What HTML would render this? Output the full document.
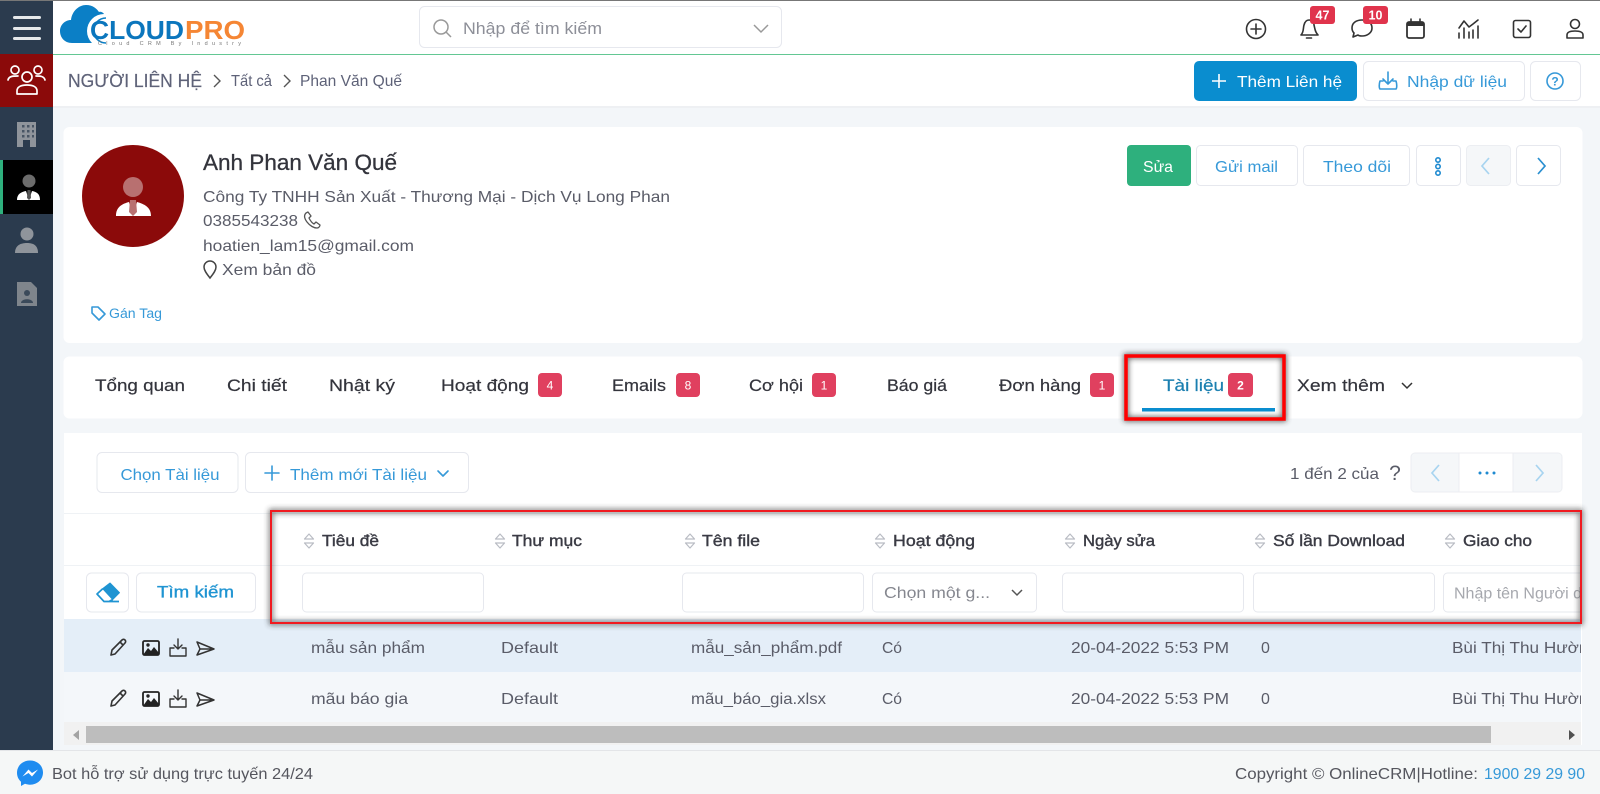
<!DOCTYPE html>
<html lang="vi"><head><meta charset="utf-8"><title>CloudPro - Người liên hệ</title>
<style>
html,body{margin:0;padding:0;width:1600px;height:794px;overflow:hidden;background:#f3f6f9}
svg{display:block}
text{font-family:"Liberation Sans","DejaVu Sans",sans-serif;fill:#5a5c68;font-size:16px}
.b{fill:#3699d8}.d{fill:#33343c}.m{fill:#3a3b44;stroke:#3a3b44;stroke-width:.4;font-size:16px}
.t{fill:#33343c;stroke:#33343c;stroke-width:.2;font-size:16.5px}.bd{fill:#fff;font-size:12px;text-anchor:middle}
.box{fill:#fff;stroke:#e6e8ee;stroke-width:1}
.ln{fill:none;stroke:#333;stroke-width:1.6;stroke-linecap:round;stroke-linejoin:round}
.lb{fill:none;stroke:#3699d8;stroke-width:1.6;stroke-linecap:round;stroke-linejoin:round}
</style></head><body>
<svg xmlns="http://www.w3.org/2000/svg" width="1600" height="794" viewBox="0 0 1600 794">
<defs>
<filter id="sh" x="-5%" y="-25%" width="110%" height="150%"><feGaussianBlur stdDeviation="3"/></filter>
<clipPath id="cl"><rect x="64" y="500" width="1517" height="240"/></clipPath>
<g id="sort"><path d="M-4.5 -2 L0 -7 L4.5 -2 Z M-4.5 2 L0 7 L4.5 2 Z" fill="none" stroke="#b9bcc4" stroke-width="1.2" stroke-linejoin="round"/></g>
<g id="acts">
<path d="M-40 7 L-39 2 L-29 -8 C-27 -10 -24 -7 -26 -5 L-36 6 Z M-31 -6 L-28 -3" fill="none" stroke="#333" stroke-width="1.6" stroke-linejoin="round"/>
<rect x="-8" y="-7" width="16" height="14" rx="1.5" fill="none" stroke="#222" stroke-width="1.8"/>
<path d="M-8 7 L-3 0 L0 3 L3 -1 L8 5 V7 Z" fill="#222"/><circle cx="-3" cy="-3" r="1.7" fill="#222"/>
<path d="M27 -9 V1 M23 -3 L27 1 L31 -3 M23 0 H19 V8 H35 V0 H31" fill="none" stroke="#333" stroke-width="1.4" stroke-linejoin="round" stroke-linecap="round"/>
<path d="M46 -6 L63 1 L46 7 L49 1 Z M49 1 H63" fill="none" stroke="#333" stroke-width="1.5" stroke-linejoin="round"/>
</g>
</defs>

<rect width="1600" height="794" fill="#f3f6f9"/>

<!-- top bar -->
<rect x="53" y="0" width="1547" height="54" fill="#fff"/>
<rect x="53" y="54" width="1547" height="1" fill="#63c793"/>
<rect x="0" y="0" width="1600" height="1" fill="#777"/>
<!-- logo -->
<path d="M72 43 C64 43 60 37 60 31 C60 25 65 20 71 20 C72 11 79 5 86 5 C93 5 97 9 99 12 C102 11 105 14 105 17 L105 43 Z" fill="#0b7fc6"/>
<circle cx="104" cy="31" r="17" fill="#fff"/>
<path d="M106 18 A12.500 12.500 0 0 0 106 43" fill="none" stroke="#0b7fc6" stroke-width="1.6"/>
<text x="90" y="39" style="font-size:26px;font-weight:700;fill:#0b76bd" textLength="94" lengthAdjust="spacingAndGlyphs">CLOUD</text>
<text x="185" y="39" style="font-size:26px;font-weight:700;fill:#f58634" textLength="60" lengthAdjust="spacingAndGlyphs">PRO</text>
<text x="98" y="45" style="font-size:5.500px;fill:#777" textLength="143" lengthAdjust="spacing">Cloud CRM By Industry</text>
<!-- search -->
<rect x="419.500" y="6.500" width="362" height="41" rx="5" class="box"/>
<circle cx="441" cy="27" r="7" fill="none" stroke="#999" stroke-width="1.500"/><path d="M446 32 L451 37" stroke="#999" stroke-width="1.500"/>
<text x="463" y="34" style="font-size:17px;fill:#8d8f98" textLength="139" lengthAdjust="spacingAndGlyphs">Nhập để tìm kiếm</text>
<path d="M754 25 L761 32 L768 25" fill="none" stroke="#999" stroke-width="1.500"/>
<!-- top icons -->
<circle cx="1256" cy="29" r="9.500" class="ln"/><path d="M1256 24 V34 M1251 29 H1261" class="ln"/>
<path d="M1301 35 C1304 32 1303 28 1304 25 C1305 21 1307 20 1309 20 C1312 20 1314 22 1314 25 C1315 29 1315 32 1318 35 Z" class="ln"/><path d="M1306.500 38 H1311.500" class="ln"/>
<path d="M1362 20 C1368 20 1372 23 1372 28 C1372 33 1367 36 1362 36 C1360 36 1359 36 1358 35 L1353 37 L1354 33 C1353 32 1352 30 1352 28 C1352 23 1356 20 1362 20 Z" class="ln"/>
<rect x="1407" y="22" width="17" height="16" rx="2" fill="none" stroke="#333" stroke-width="1.800"/><rect x="1407" y="22" width="17" height="4" fill="#333"/><path d="M1411 19 V23 M1420 19 V23" class="ln"/>
<path d="M1459 28 L1464 21 L1469 27 L1473 24 L1478 20" class="ln"/><path d="M1459 33 V38 M1464 28 V38 M1469 32 V38 M1473 30 V38 M1478 26 V38" class="ln"/>
<rect x="1513.500" y="20.500" width="17" height="17" rx="2" class="ln"/><path d="M1518 29 L1521 32 L1526 26" class="ln"/>
<circle cx="1575" cy="24" r="4.500" class="ln"/><path d="M1567 38 V35 C1567 32 1570 31 1575 31 C1580 31 1583 32 1583 35 V38 Z" class="ln"/>
<rect x="1310" y="6" width="25" height="18" rx="3" fill="#e0344c"/><text x="1322.500" y="19.500" class="bd" style="font-weight:700;font-size:12.500px">47</text>
<rect x="1363" y="6" width="25" height="18" rx="3" fill="#e0344c"/><text x="1375.500" y="19.500" class="bd" style="font-weight:700;font-size:12.500px">10</text>

<!-- breadcrumb bar -->
<rect x="53" y="55" width="1547" height="52" fill="#fff"/>
<rect x="53" y="106" width="1547" height="2" fill="#eef0f3"/>
<text x="68" y="87" style="font-size:18.500px;fill:#5e6278;stroke:#5e6278;stroke-width:.2" textLength="134" lengthAdjust="spacingAndGlyphs">NGƯỜI LIÊN HỆ</text>
<path d="M214 75 L220 81 L214 87" fill="none" stroke="#555" stroke-width="1.400"/>
<text x="231" y="86" style="fill:#5e6278" textLength="41" lengthAdjust="spacingAndGlyphs">Tất cả</text>
<path d="M284 75 L290 81 L284 87" fill="none" stroke="#555" stroke-width="1.400"/>
<text x="300" y="86" style="fill:#5e6278" textLength="102" lengthAdjust="spacingAndGlyphs">Phan Văn Quế</text>
<rect x="1194" y="61" width="163" height="40" rx="5" fill="#0a8dcf"/>
<path d="M1219 74 V88 M1212 81 H1226" stroke="#fff" stroke-width="1.600" fill="none"/>
<text x="1237" y="87" style="fill:#fff" textLength="105" lengthAdjust="spacingAndGlyphs">Thêm Liên hệ</text>
<rect x="1363.500" y="61.500" width="161" height="39" rx="5" class="box"/>
<path d="M1388 72 V84 M1383 79 L1388 84 L1393 79 M1383 81 H1380 C1379 84 1379 88 1380 89 H1396 C1397 88 1397 84 1396 81 H1393" class="lb"/>
<text x="1407" y="87" class="b" textLength="100" lengthAdjust="spacingAndGlyphs">Nhập dữ liệu</text>
<rect x="1530.500" y="61.500" width="50" height="39" rx="5" class="box"/>
<circle cx="1555" cy="81" r="8" class="lb"/><text x="1555" y="85.500" class="b" style="font-size:12px;font-weight:700;text-anchor:middle">?</text>

<!-- sidebar -->
<rect x="0" y="1" width="53" height="749" fill="#2b3b4e"/>
<g fill="#e5e8ea"><rect x="13" y="16" width="28" height="3" rx="1.500"/><rect x="13" y="27" width="28" height="3" rx="1.500"/><rect x="13" y="37" width="28" height="3" rx="1.500"/></g>
<rect x="0" y="54" width="53" height="53" fill="#8b0a0a"/>
<g fill="none" stroke="#fff" stroke-width="1.700" stroke-linecap="round">
<circle cx="15" cy="70" r="4"/><circle cx="38" cy="70" r="4"/><circle cx="27" cy="77" r="5"/>
<path d="M8 80 C9 76 13 76 18 76 M45 80 C44 76 40 76 36 76"/>
<path d="M17 94 V91 C17 87 21 85 27 85 C33 85 37 87 37 91 V94 Z" stroke-linejoin="round"/></g>
<path d="M17 122 H36 V147 H30 V140 H23 V147 H17 Z" fill="#8f949b"/>
<g fill="#2b3b4e" opacity=".7"><rect x="22" y="125" width="2.500" height="2.500"/><rect x="27" y="125" width="2.500" height="2.500"/><rect x="32" y="125" width="2" height="2.500"/><rect x="22" y="130" width="2.500" height="2.500"/><rect x="27" y="130" width="2.500" height="2.500"/><rect x="32" y="130" width="2" height="2.500"/><rect x="22" y="135" width="2.500" height="2.500"/><rect x="27" y="135" width="2.500" height="2.500"/><rect x="32" y="135" width="2" height="2.500"/></g>
<rect x="0" y="160" width="53" height="54" fill="#000"/><rect x="0" y="160" width="3" height="54" fill="#2eb07d"/>
<circle cx="29" cy="181" r="6.500" fill="#6c6c6c"/>
<path d="M17 200 C17 194 21 192 26 191 L29 200 L32 191 C37 192 40 194 40 200 Z" fill="#fff"/><path d="M27.500 190 H30.500 L31 198 L29 200 L27 198 Z" fill="#555"/>
<circle cx="27" cy="234" r="6.500" fill="#8f949b"/><path d="M15 253 C15 245 21 243 27 243 C33 243 38 245 38 253 Z" fill="#8f949b"/>
<path d="M17 282 H31 L37 288 V306 H17 Z" fill="#7f858c"/><circle cx="27" cy="293" r="3" fill="#2b3b4e" opacity=".8"/><path d="M21 303 C21 298 33 298 33 303 Z" fill="#2b3b4e" opacity=".8"/>

<!-- profile card -->
<rect x="63.500" y="127" width="1519" height="216" rx="6" fill="#fff"/>
<circle cx="133" cy="196" r="51" fill="#8b0a0a"/>
<circle cx="133" cy="187" r="10" fill="#b87070"/>
<path d="M116 216 C116 207 122 204 129 202 L133 216 L137 202 C144 204 151 207 151 216 Z" fill="#fff"/>
<path d="M130 200 H136 L137 212 L133 216 L129 212 Z" fill="#b87070"/>
<text x="203" y="170" style="font-size:22.500px;fill:#33343c;stroke:#33343c;stroke-width:.3" textLength="194" lengthAdjust="spacingAndGlyphs">Anh Phan Văn Quế</text>
<text x="203" y="202" textLength="467" lengthAdjust="spacingAndGlyphs">Công Ty TNHH Sản Xuất - Thương Mại - Dịch Vụ Long Phan</text>
<text x="203" y="226" textLength="95" lengthAdjust="spacingAndGlyphs">0385543238</text>
<path d="M306 213 C304 215 304 218 307 222 C310 226 314 228 317 228 C319 228 320 226 320 225 L316 222 L314 224 C312 223 310 220 309 218 L311 216 L308 212 Z" fill="none" stroke="#555" stroke-width="1.300" stroke-linejoin="round"/>
<text x="203" y="251" textLength="211" lengthAdjust="spacingAndGlyphs">hoatien_lam15@gmail.com</text>
<path d="M210 278 C206 273 204 270 204 267 A6 6 0 0 1 216 267 C216 270 214 273 210 278 Z" fill="none" stroke="#444" stroke-width="1.500"/>
<text x="222" y="275" textLength="94" lengthAdjust="spacingAndGlyphs">Xem bản đồ</text>
<path d="M92 307 H98 L105 314 L99 320 L92 313 Z" class="lb" stroke-width="1.300"/>
<text x="109" y="318" class="b" style="font-size:13.500px" textLength="53" lengthAdjust="spacingAndGlyphs">Gán Tag</text>
<rect x="1127" y="145" width="64" height="41" rx="4" fill="#2eb07d"/>
<text x="1143" y="172" style="fill:#fff" textLength="30" lengthAdjust="spacingAndGlyphs">Sửa</text>
<rect x="1196.500" y="145.500" width="101" height="40" rx="4" class="box"/>
<text x="1215" y="172" class="b" textLength="63" lengthAdjust="spacingAndGlyphs">Gửi mail</text>
<rect x="1303.500" y="145.500" width="106" height="40" rx="4" class="box"/>
<text x="1323" y="172" class="b" textLength="68" lengthAdjust="spacingAndGlyphs">Theo dõi</text>
<rect x="1416.500" y="145.500" width="44" height="40" rx="4" class="box"/>
<g fill="none" stroke="#1f8ad0" stroke-width="1.600"><circle cx="1438" cy="160" r="2.200"/><circle cx="1438" cy="166.500" r="2.200"/><circle cx="1438" cy="173" r="2.200"/></g>
<rect x="1466.500" y="145.500" width="44" height="40" rx="4" fill="#f5f7f9" stroke="#eceef2"/>
<path d="M1489 158 L1482 166 L1489 174" fill="none" stroke="#a8d4f0" stroke-width="1.700"/>
<rect x="1516.500" y="145.500" width="44" height="40" rx="4" class="box"/>
<path d="M1538 158 L1545 166 L1538 174" fill="none" stroke="#2a8fd0" stroke-width="1.700"/>

<!-- tabs -->
<rect x="63.500" y="356.500" width="1519" height="62" rx="6" fill="#fff"/>
<text x="95" y="391" class="t" textLength="90" lengthAdjust="spacingAndGlyphs">Tổng quan</text>
<text x="227" y="391" class="t" textLength="60" lengthAdjust="spacingAndGlyphs">Chi tiết</text>
<text x="329" y="391" class="t" textLength="66" lengthAdjust="spacingAndGlyphs">Nhật ký</text>
<text x="441" y="391" class="t" textLength="88" lengthAdjust="spacingAndGlyphs">Hoạt động</text>
<rect x="538" y="373" width="24" height="24" rx="4" fill="#e0405f"/><text x="550" y="389.500" class="bd">4</text>
<text x="612" y="391" class="t" textLength="54" lengthAdjust="spacingAndGlyphs">Emails</text>
<rect x="676" y="373" width="24" height="24" rx="4" fill="#e0405f"/><text x="688" y="389.500" class="bd">8</text>
<text x="749" y="391" class="t" textLength="54" lengthAdjust="spacingAndGlyphs">Cơ hội</text>
<rect x="812" y="373" width="24" height="24" rx="4" fill="#e0405f"/><text x="824" y="389.500" class="bd">1</text>
<text x="887" y="391" class="t" textLength="60" lengthAdjust="spacingAndGlyphs">Báo giá</text>
<text x="999" y="391" class="t" textLength="82" lengthAdjust="spacingAndGlyphs">Đơn hàng</text>
<rect x="1090" y="373" width="24" height="24" rx="4" fill="#e0405f"/><text x="1102" y="389.500" class="bd">1</text>
<text x="1163" y="391" class="t" style="fill:#1a7fb0;stroke:#1a7fb0" textLength="61" lengthAdjust="spacingAndGlyphs">Tài liệu</text>
<rect x="1228" y="373" width="25" height="24" rx="4" fill="#e0405f"/><text x="1240.500" y="389.500" class="bd" style="font-weight:700">2</text>
<rect x="1142" y="408" width="133" height="3.500" fill="#0a8dcf"/>
<text x="1297" y="391" class="t" textLength="88" lengthAdjust="spacingAndGlyphs">Xem thêm</text>
<path d="M1402 383 L1407 388 L1412 383" fill="none" stroke="#333" stroke-width="1.500"/>

<!-- documents panel -->
<rect x="64" y="433" width="1518" height="312" fill="#fff"/>
<rect x="97" y="452.500" width="141" height="40" rx="5" class="box"/>
<text x="120.500" y="480" class="b" textLength="99" lengthAdjust="spacingAndGlyphs">Chọn Tài liệu</text>
<rect x="245.500" y="452.500" width="223" height="40" rx="5" class="box"/>
<path d="M272 466 V480 M265 473 H279" class="lb"/>
<text x="290" y="480" class="b" textLength="137" lengthAdjust="spacingAndGlyphs">Thêm mới Tài liệu</text>
<path d="M438 471 L443 476 L448 471" class="lb"/>
<text x="1290" y="479" textLength="89" lengthAdjust="spacingAndGlyphs">1 đến 2 của</text>
<text x="1395" y="480" style="font-size:21px;text-anchor:middle">?</text>
<rect x="1411" y="453" width="151" height="39" rx="4" fill="#f5f7f9" stroke="#eceef2"/>
<rect x="1459" y="453" width="54" height="39" fill="#fff" stroke="#eceef2"/>
<path d="M1439 465 L1432 473 L1439 481" fill="none" stroke="#a8d4f0" stroke-width="1.700"/>
<path d="M1536 465 L1543 473 L1536 481" fill="none" stroke="#a8d4f0" stroke-width="1.700"/>
<g fill="#1f8ad0"><circle cx="1480" cy="473" r="1.500"/><circle cx="1487" cy="473" r="1.500"/><circle cx="1494" cy="473" r="1.500"/></g>

<rect x="64" y="513" width="1518" height="1" fill="#eff2f5"/>
<rect x="64" y="565" width="1518" height="1" fill="#eff2f5"/>
<g clip-path="url(#cl)">
<use href="#sort" x="309" y="541"/><text x="322" y="546" class="m" textLength="57" lengthAdjust="spacingAndGlyphs">Tiêu đề</text>
<use href="#sort" x="500" y="541"/><text x="512" y="546" class="m" textLength="70" lengthAdjust="spacingAndGlyphs">Thư mục</text>
<use href="#sort" x="690" y="541"/><text x="702" y="546" class="m" textLength="58" lengthAdjust="spacingAndGlyphs">Tên file</text>
<use href="#sort" x="880" y="541"/><text x="893" y="546" class="m" textLength="82" lengthAdjust="spacingAndGlyphs">Hoạt động</text>
<use href="#sort" x="1070" y="541"/><text x="1083" y="546" class="m" textLength="72" lengthAdjust="spacingAndGlyphs">Ngày sửa</text>
<use href="#sort" x="1260" y="541"/><text x="1273" y="546" class="m" textLength="132" lengthAdjust="spacingAndGlyphs">Số lần Download</text>
<use href="#sort" x="1450" y="541"/><text x="1463" y="546" class="m" textLength="69" lengthAdjust="spacingAndGlyphs">Giao cho</text>

<rect x="86.500" y="573" width="42" height="39" rx="5" class="box"/>
<path d="M110 583 L119.500 592.700 L112.700 599.500 L102.700 588.700 Z" fill="#1f94d2" stroke="#1f94d2" stroke-linejoin="round"/>
<path d="M102.700 588.700 L97 594 L104 601.500 H109 L112.700 599.500 M104 601.500 H119" fill="none" stroke="#1f94d2" stroke-width="1.700" stroke-linejoin="round"/>
<rect x="136.500" y="573" width="119" height="39" rx="5" class="box"/>
<text x="157" y="597.500" style="fill:#1f94d2;stroke:#1f94d2;stroke-width:.35;font-size:16.500px" textLength="77" lengthAdjust="spacingAndGlyphs">Tìm kiếm</text>
<rect x="302.500" y="573" width="181" height="39" rx="4" class="box"/>
<rect x="682.500" y="573" width="181" height="39" rx="4" class="box"/>
<rect x="872.500" y="573" width="164" height="39" rx="4" class="box"/>
<text x="884" y="598" style="fill:#85878f" textLength="106" lengthAdjust="spacingAndGlyphs">Chọn một g...</text>
<path d="M1012 590 L1017 595 L1022 590" fill="none" stroke="#555" stroke-width="1.500"/>
<rect x="1062.500" y="573" width="181" height="39" rx="4" class="box"/>
<rect x="1253.500" y="573" width="181" height="39" rx="4" class="box"/>
<rect x="1443.500" y="573" width="181" height="39" rx="4" class="box"/>
<text x="1454" y="598.500" style="fill:#a6a8ae;font-size:15.500px" textLength="128" lengthAdjust="spacingAndGlyphs">Nhập tên Người d</text>

<rect x="64" y="619" width="1517" height="53" fill="#e4eef8"/>
<rect x="64" y="672" width="1517" height="50" fill="#f4f7fa"/>
<use href="#acts" x="151" y="648"/><use href="#acts" x="151" y="699"/>
<text x="311" y="653" textLength="114" lengthAdjust="spacingAndGlyphs">mẫu sản phẩm</text>
<text x="501" y="653" textLength="57" lengthAdjust="spacingAndGlyphs">Default</text>
<text x="691" y="653" textLength="151" lengthAdjust="spacingAndGlyphs">mẫu_sản_phẩm.pdf</text>
<text x="882" y="653" textLength="20" lengthAdjust="spacingAndGlyphs">Có</text>
<text x="1071" y="653" textLength="158" lengthAdjust="spacingAndGlyphs">20-04-2022 5:53 PM</text>
<text x="1261" y="653">0</text>
<text x="1452" y="653" textLength="146" lengthAdjust="spacingAndGlyphs">Bùi Thị Thu Hường</text>
<text x="311" y="704" textLength="97" lengthAdjust="spacingAndGlyphs">mãu báo gia</text>
<text x="501" y="704" textLength="57" lengthAdjust="spacingAndGlyphs">Default</text>
<text x="691" y="704" textLength="135" lengthAdjust="spacingAndGlyphs">mãu_báo_gia.xlsx</text>
<text x="882" y="704" textLength="20" lengthAdjust="spacingAndGlyphs">Có</text>
<text x="1071" y="704" textLength="158" lengthAdjust="spacingAndGlyphs">20-04-2022 5:53 PM</text>
<text x="1261" y="704">0</text>
<text x="1452" y="704" textLength="146" lengthAdjust="spacingAndGlyphs">Bùi Thị Thu Hường</text>
</g>
<rect x="64" y="722" width="1517" height="23" fill="#f1f1f1"/>
<rect x="86" y="726" width="1405" height="17" fill="#bdbdbd"/>
<path d="M79 730 L73 735 L79 740 Z" fill="#a3a3a3"/>
<path d="M1569 730 L1575 735 L1569 740 Z" fill="#505050"/>

<!-- red highlight boxes -->
<rect x="271" y="511" width="1310" height="112" fill="none" stroke="#333" stroke-width="3.500" filter="url(#sh)" opacity=".8"/>
<rect x="271" y="511" width="1310" height="112" fill="none" stroke="#f01a20" stroke-width="2"/>
<rect x="1126" y="356" width="158" height="63" fill="none" stroke="#333" stroke-width="4.500" filter="url(#sh)" opacity=".85"/>
<rect x="1126" y="356" width="158" height="63" fill="none" stroke="#f00" stroke-width="3.500"/>

<!-- footer -->
<rect x="0" y="750" width="1600" height="44" fill="#f5f7f7"/>
<rect x="0" y="750" width="1600" height="1" fill="#e3e5e8"/>
<path d="M30 760.500 C22.500 760.500 17 765.800 17 772.800 C17 776.500 18.500 779.600 21 781.800 V786 L25 783.800 C26.500 784.400 28.200 784.700 30 784.700 C37.500 784.700 43 779.400 43 772.500 C43 765.800 37.500 760.500 30 760.500 Z" fill="#1f8cf0"/>
<path d="M22.500 776.500 L28.500 769.500 L32 773 L38 769.500 L32 776.500 L28.500 773 Z" fill="#fff"/>
<text x="52" y="779" style="fill:#55565e" textLength="261" lengthAdjust="spacingAndGlyphs">Bot hỗ trợ sử dụng trực tuyến 24/24</text>
<text x="1235" y="779" style="fill:#55565e" textLength="243" lengthAdjust="spacingAndGlyphs">Copyright © OnlineCRM|Hotline:</text>
<text x="1484" y="779" class="b" textLength="101" lengthAdjust="spacingAndGlyphs">1900 29 29 90</text>
</svg>
</body></html>
